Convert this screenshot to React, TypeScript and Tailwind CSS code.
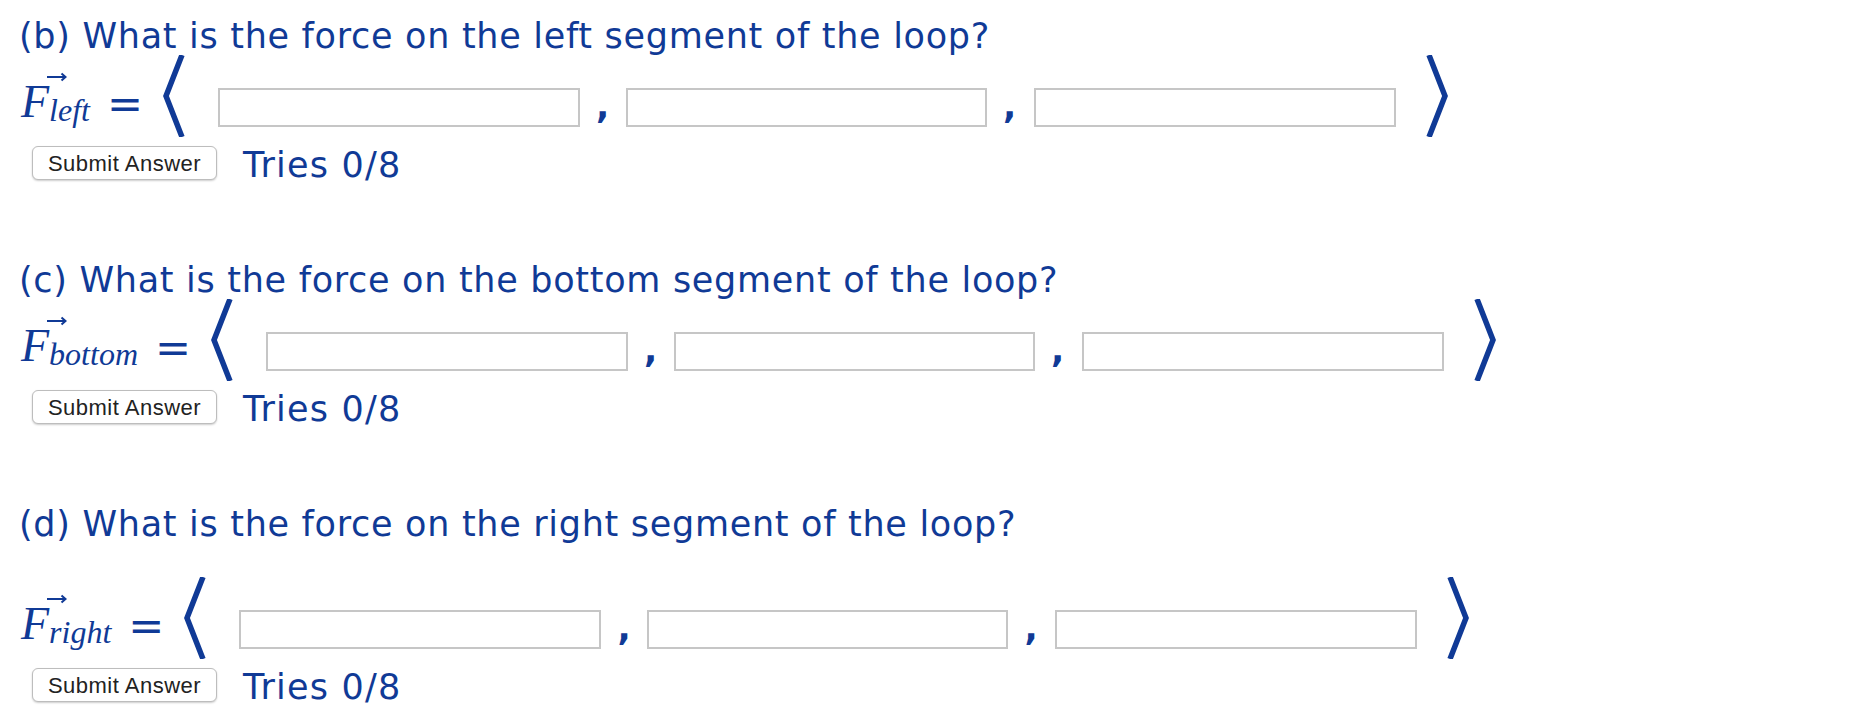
import React from "react";

const BLUE = "#103a96";

function Arrow() {
  return (
    <svg
      className="absolute left-[26px] top-[-7px]"
      width="20"
      height="10"
      viewBox="0 0 20 10"
    >
      <path d="M0 5 H18" stroke={BLUE} strokeWidth="2" fill="none" />
      <path
        d="M14.5 1.5 L18.5 5 L14.5 8.5"
        stroke={BLUE}
        strokeWidth="2"
        fill="none"
        strokeLinejoin="miter"
      />
    </svg>
  );
}

function LeftBracket() {
  return (
    <svg className="shrink-0 block" width="26" height="82" viewBox="0 0 26 82">
      <polyline
        points="21,0 5,41 21,82"
        fill="none"
        stroke={BLUE}
        strokeWidth="5.5"
        strokeLinejoin="miter"
      />
    </svg>
  );
}

function RightBracket() {
  return (
    <svg className="shrink-0 block" width="26" height="82" viewBox="0 0 26 82">
      <polyline
        points="3,0 19,41 3,82"
        fill="none"
        stroke={BLUE}
        strokeWidth="5.5"
        strokeLinejoin="miter"
      />
    </svg>
  );
}

function Box({ w }: { w: string }) {
  return (
    <input
      type="text"
      className={`${w} mt-[33px] h-[39px] shrink-0 border-2 border-[#c6c6c6] bg-white outline-none`}
    />
  );
}

function Comma({ w }: { w: string }) {
  return (
    <span
      className={`${w} shrink-0 pl-[16px] mt-[34px] text-[35px] font-bold leading-[34px] text-[#103a96] font-['DejaVu_Sans',sans-serif]`}
    >
      ,
    </span>
  );
}

function Section({
  letter,
  noun,
  sub,
  rowMt,
  sectionMt,
}: {
  letter: string;
  noun: string;
  sub: string;
  rowMt: string;
  sectionMt: string;
}) {
  return (
    <div className={sectionMt}>
      <div className="pl-[19px] h-[40px] text-[35px] tracking-[0.7px] leading-[40px] text-[#103a96] font-['DejaVu_Sans',sans-serif] whitespace-nowrap">
        ({letter}) What is the force on the {noun} segment of the loop?
      </div>
      <div className={`flex items-start h-[82px] pl-[21px] ${rowMt}`}>
        <div className="relative mt-[24px] flex items-baseline text-[#103a96] font-['Liberation_Serif',serif] italic">
          <span className="text-[46px] leading-[46px]">F</span>
          <span className="relative top-[4px] text-[32px] leading-[32px]">
            {sub}
          </span>
          <Arrow />
        </div>
        <span className="ml-[17px] mt-[27px] text-[43px] leading-[43px] text-[#103a96] font-['DejaVu_Sans',sans-serif]">
          =
        </span>
        <div className="ml-[18px]">
          <LeftBracket />
        </div>
        <div className="ml-[31px] flex items-start">
          <Box w="w-[362px]" />
          <Comma w="w-[46px]" />
          <Box w="w-[361px]" />
          <Comma w="w-[47px]" />
          <Box w="w-[362px]" />
        </div>
        <div className="ml-[30px]">
          <RightBracket />
        </div>
      </div>
      <div className="flex items-start mt-[9px] pl-[32px]">
        <button
          type="button"
          className="w-[185px] h-[34px] shrink-0 rounded-[6px] border border-[#bdbdbd] bg-white shadow-[0_1px_2px_rgba(0,0,0,0.2)] text-[22px] tracking-[0.5px] text-[#222222] font-['Liberation_Sans',Arial,sans-serif]"
        >
          Submit Answer
        </button>
        <span className="ml-[26px] mt-[2px] text-[35px] tracking-[1.2px] leading-[34px] text-[#103a96] font-['DejaVu_Sans',sans-serif] whitespace-nowrap">
          Tries 0/8
        </span>
      </div>
    </div>
  );
}

export default function App() {
  return (
    <div className="w-[1862px] h-[706px] bg-white overflow-hidden pt-[16px]">
      <Section
        letter="b"
        noun="left"
        sub="left"
        rowMt="-mt-[1px]"
        sectionMt=""
      />
      <Section
        letter="c"
        noun="bottom"
        sub="bottom"
        rowMt="-mt-[1px]"
        sectionMt="mt-[78px]"
      />
      <Section
        letter="d"
        noun="right"
        sub="right"
        rowMt="mt-[33px]"
        sectionMt="mt-[78px]"
      />
    </div>
  );
}
